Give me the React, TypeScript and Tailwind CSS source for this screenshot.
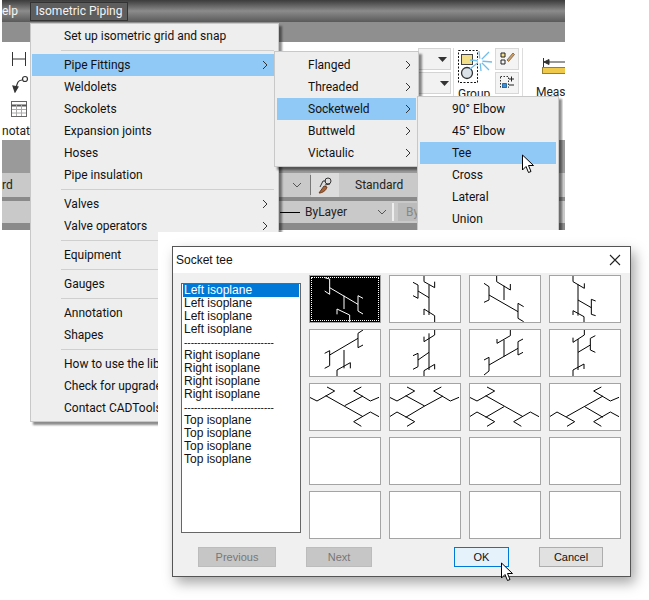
import type { ReactNode } from "react";

const uiFont = "font-['Roboto',sans-serif]";
const dlgFont = "font-['Liberation_Sans',sans-serif]";

type Row = { label?: string; arrow?: boolean; active?: boolean; sep?: boolean };

const mainMenu: Row[] = [
  { label: "Set up isometric grid and snap" },
  { sep: true },
  { label: "Pipe Fittings", arrow: true, active: true },
  { label: "Weldolets" },
  { label: "Sockolets" },
  { label: "Expansion joints" },
  { label: "Hoses" },
  { label: "Pipe insulation" },
  { sep: true },
  { label: "Valves", arrow: true },
  { label: "Valve operators", arrow: true },
  { sep: true },
  { label: "Equipment" },
  { sep: true },
  { label: "Gauges" },
  { sep: true },
  { label: "Annotation" },
  { label: "Shapes" },
  { sep: true },
  { label: "How to use the library" },
  { label: "Check for upgrades" },
  { label: "Contact CADTools" },
];

const fittingsMenu: Row[] = [
  { label: "Flanged", arrow: true },
  { label: "Threaded", arrow: true },
  { label: "Socketweld", arrow: true, active: true },
  { label: "Buttweld", arrow: true },
  { label: "Victaulic", arrow: true },
];

const socketMenu: Row[] = [
  { label: "90° Elbow" },
  { label: "45° Elbow" },
  { label: "Tee", active: true },
  { label: "Cross" },
  { label: "Lateral" },
  { label: "Union" },
];

const isoRows = [
  ["Left isoplane", "Left isoplane", "Left isoplane", "Left isoplane"],
  ["Right isoplane", "Right isoplane", "Right isoplane", "Right isoplane"],
  ["Top isoplane", "Top isoplane", "Top isoplane", "Top isoplane"],
];

// polylines are in the same units for every cell: 3 units = 1px, origin at the sheet's corner
const fittings: { x: number; y: number; d: string }[] = [
  { x: 28, y: 30, d: "M75 38L90 42V88L75 78M90 68L175 118M175 138V92L190 100M175 138L190 147M133 92V132M112 148V132L150 150V172" },
  { x: 268, y: 30, d: "M373 32V50L405 68V50M388 60V150M388 98L355 78M340 52L355 60V100L340 92M373 150V132L405 152V172" },
  { x: 508, y: 30, d: "M591 32V50L632 75V57M613 62V105M568 90L655 140M553 55L568 65V105L553 112M672 125L655 115V160L672 170" },
  { x: 748, y: 30, d: "M820 32V50L854 70V55M835 58V152M835 105L875 128M888 108L875 103V148L888 152M820 150V137L853 155V172" },
  { x: 28, y: 192, d: "M90 270L175 220M190 195L175 205V248L190 240M75 265L90 257V302L75 310M133 255V310M112 333V315L152 293V310" },
  { x: 268, y: 192, d: "M388 205V315M405 195V210L373 230V215M388 262L355 285M340 272L355 265V305L340 313M373 333V317L405 298V313" },
  { x: 508, y: 192, d: "M632 195V212L592 235V222M613 225V275M568 300L655 250M670 222L655 230V270L670 262M553 285L568 277V318L553 330" },
  { x: 748, y: 192, d: "M854 195V210L820 232V218M835 222V315M835 262L872 240M887 212L872 220V255L887 262M820 333V315L853 297V312" },
  { x: 28, y: 354, d: "M30 397L52 408L105 378L82 366M78 392L190 455M185 366L162 378L212 408L238 397M135 422L190 393M238 455L212 441L162 470L185 484" },
  { x: 268, y: 354, d: "M270 397L292 408L345 378L322 366M318 392L375 423L430 393M425 366L402 378L452 408L478 397M270 455L292 441L345 470L322 484M318 457L375 423" },
  { x: 508, y: 354, d: "M510 397L532 408L585 378L562 366M558 392L670 455M510 455L532 441L585 470L562 484M558 457L613 425M718 455L692 441L642 470L665 484" },
  { x: 748, y: 354, d: "M905 366L882 378L932 408L958 397M910 393L800 455M855 425L910 457M958 455L932 441L882 470L905 484M750 455L772 441L825 470L802 484" },
];

function Chevron() {
  return (
    <svg width="6" height="10" viewBox="0 0 6 10" fill="none" stroke="#333" strokeWidth="1">
      <path d="M1 1l4 4-4 4" />
    </svg>
  );
}

function DropChevron() {
  return (
    <svg width="10" height="6" viewBox="0 0 10 6" fill="none" stroke="#555">
      <path d="M1 1l4 4 4-4" />
    </svg>
  );
}

function ArrowCursor({ className }: { className: string }) {
  return (
    <svg className={className} width="14" height="20" viewBox="0 0 13 20" stroke="#000" fill="#fff" strokeWidth="1">
      <path d="M1 1v15l3.500-3.500 2.500 6 2.500-1-2.500-6H12z" />
    </svg>
  );
}

function MenuRows({ rows, inset, trail }: { rows: Row[]; inset: string; trail: string }) {
  return (
    <>
      {rows.map((row, i) =>
        row.sep ? (
          <div key={i} className="my-[3px] ml-[29px] mr-[3px] h-px bg-[#cfcfcf]" />
        ) : (
          <div
            key={i}
            className={`flex h-[22px] items-center justify-between ${inset} ${trail} ${row.active ? "bg-[#90c8f6]" : ""}`}
          >
            <span className="whitespace-nowrap">{row.label}</span>
            {row.arrow && <Chevron />}
          </div>
        ),
      )}
    </>
  );
}

function Menu({ className, children }: { className: string; children: ReactNode }) {
  return (
    <div
      className={`absolute ${uiFont} text-[12px] text-[#111] bg-[#eeeeee] border border-[#c8c8c8] shadow-[3px_3px_2px_rgba(0,0,0,0.45)] ${className}`}
    >
      {children}
    </div>
  );
}

function DimIcon() {
  return (
    <svg width="16" height="16" viewBox="0 0 16 16" fill="none" stroke="#333">
      <path d="M1.500 1v14M14.500 1v14M2 8h12" />
    </svg>
  );
}

function LeaderIcon() {
  return (
    <svg width="18" height="18" viewBox="0 0 18 18" fill="none" stroke="#333" strokeWidth="1.2">
      <circle cx="14" cy="4" r="2.500" />
      <path d="M11 5C7 5 6 8 5 14" />
      <path d="M2 11l2 6 3-5z" fill="#333" />
    </svg>
  );
}

function TableIcon() {
  return (
    <svg width="16" height="16" viewBox="0 0 16 16" fill="#fff" stroke="#666">
      <rect x="0.500" y="0.500" width="15" height="15" />
      <path d="M0.500 4.500h15" stroke="#555" strokeWidth="2" />
      <path d="M5.500 4v11M10.500 4v11M1 8.500h14M1 12h14" stroke="#aaa" />
    </svg>
  );
}

function GroupIcon() {
  return (
    <svg width="36" height="34" viewBox="0 0 36 34" fill="none">
      <rect x="0.500" y="0.500" width="19" height="32" stroke="#111" strokeDasharray="2 1.500" />
      <rect x="3.500" y="4.500" width="11" height="10" fill="#f3de8a" stroke="#444" />
      <circle cx="9" cy="23" r="5.500" fill="#dbe3e8" stroke="#333" strokeWidth="1.300" />
      <path d="M22 11l9-9M22 11l12 1M22 11l9 9M22 11l-10-1M22 11L12 19M22 11l-1-10M22 11l1 10" stroke="#6fbdea" strokeWidth="1.300" />
      <circle cx="22" cy="11" r="2.500" fill="#fff" />
    </svg>
  );
}

function ComboBox({ tip }: { tip: string }) {
  return (
    <div className={`flex h-[22px] w-[33px] items-center border border-[#d4d4d4] bg-[#f2f2f2] ${tip}`}>
      <svg width="9" height="5" viewBox="0 0 9 5" fill="#333">
        <path d="M0 0h9L4.500 5z" />
      </svg>
    </div>
  );
}

function RibbonTool({ children }: { children: ReactNode }) {
  return (
    <div className="flex h-[22px] w-[24px] items-center justify-center border border-[#d8d8d8] bg-[#f4f4f4]">
      <svg width="18" height="18" viewBox="0 0 18 18" fill="none">
        {children}
      </svg>
    </div>
  );
}

function Fitting({ x, y, d, selected }: { x: number; y: number; d: string; selected: boolean }) {
  return (
    <div className={`relative box-border h-[48px] w-[72px] border border-[#a4a4a4] ${selected ? "bg-black" : "bg-white"}`}>
      {selected && <div className="absolute inset-px border border-dotted border-white" />}
      <svg
        className="h-full w-full"
        viewBox={`${x + 3} ${y + 3} 210 138`}
        fill="none"
        stroke={selected ? "#fff" : "#000"}
        strokeWidth="3"
      >
        <path d={d} />
      </svg>
    </div>
  );
}

function DialogButton({ label, className }: { label: string; className: string }) {
  return (
    <button type="button" className={`box-border h-[20px] border text-[11px] ${className}`}>
      {label}
    </button>
  );
}

function SocketTeeDialog() {
  return (
    <div className={`absolute left-[158px] top-[232px] h-[368px] w-[491px] bg-white ${dlgFont}`}>
      <div className="absolute left-[14px] top-[14px] flex h-[331px] w-[459px] flex-col border border-[#555] bg-[#f0f0f0] shadow-[4px_6px_12px_rgba(0,0,0,0.35)]">
        <div className="flex h-[26px] items-center justify-between bg-white pl-[3px] pr-[9px] text-[12px] text-[#111]">
          <span>Socket tee</span>
          <svg width="12" height="12" viewBox="0 0 12 12" stroke="#222" strokeWidth="1.100">
            <path d="M1 1l10 10M11 1L1 11" />
          </svg>
        </div>
        <div className="flex pl-[8px] pr-[8px] pt-[2px]">
          <div className="mt-[8px] box-border h-[250px] w-[120px] border border-[#666] bg-white px-px text-[12px] leading-[13px] text-[#111]">
            {isoRows.map((group, g) => (
              <div key={g}>
                {group.map((label, i) => (
                  <div key={i} className={`pl-[1px] ${g === 0 && i === 0 ? "bg-[#0078d7] text-white" : ""}`}>
                    {label}
                  </div>
                ))}
                {g < 2 && <div className="h-[13px] overflow-hidden pl-[1px] text-[10px]">---------------------------</div>}
              </div>
            ))}
          </div>
          <div className="ml-[8px] grid grid-cols-4 gap-x-[8px] gap-y-[6px]">
            {fittings.map((f, i) => (
              <Fitting key={i} x={f.x} y={f.y} d={f.d} selected={i === 0} />
            ))}
            {Array.from({ length: 8 }).map((_, i) => (
              <div key={i} className="box-border h-[48px] w-[72px] border border-[#a4a4a4] bg-white" />
            ))}
          </div>
        </div>
        <div className="flex pl-[25px] pt-[8px]">
          <DialogButton label="Previous" className="w-[78px] border-[#bcbcbc] bg-[#c6c6c6] text-[#777]" />
          <DialogButton label="Next" className="ml-[30px] w-[66px] border-[#bcbcbc] bg-[#c6c6c6] text-[#777]" />
          <DialogButton label="OK" className="ml-[82px] w-[55px] border-[#0078d7] bg-[#e5f1fb] text-[#111]" />
          <DialogButton label="Cancel" className="ml-[30px] w-[64px] border-[#adadad] bg-[#e1e1e1] text-[#111]" />
        </div>
      </div>
      <ArrowCursor className="absolute left-[342px] top-[330px]" />
    </div>
  );
}

export default function App() {
  return (
    <div className="relative h-[600px] w-[649px] overflow-hidden bg-white">
      <div className={`ml-[2px] flex h-[230px] w-[563px] flex-col ${uiFont} text-[12px] text-[#222]`}>
        {/* menu bar */}
        <div className="flex h-[22px] items-center bg-gradient-to-b from-[#3c3c3c] via-[#8c8c8c] to-[#5a5a5a] text-[#f4f4f4]">
          <span className="w-[28px]">elp</span>
          <span className="flex h-[19px] w-[98px] items-center justify-center border border-[#333] bg-[#5e5e5e]">
            Isometric Piping
          </span>
        </div>
        <div className="h-[20px] bg-[#8f8f8f]" />
        {/* ribbon */}
        <div className="flex h-[98px] justify-between bg-white">
          <div className="flex flex-col justify-between pb-[1px] pt-[9px]">
            <div className="flex flex-col gap-[8px] pl-[9px]">
              <DimIcon />
              <LeaderIcon />
              <TableIcon />
            </div>
            <span className="whitespace-nowrap leading-[15px]">notat</span>
          </div>
          <div className="flex items-start pt-[6px]">
            <div className="flex flex-col gap-[2px]">
              <ComboBox tip="justify-end pr-[3px]" />
              <ComboBox tip="justify-end pr-[1px]" />
            </div>
            <div className="ml-[2px] h-[60px] w-px bg-[#ddd]" />
            <div className="ml-[4px] w-[37px] pt-[2px]">
              <GroupIcon />
              <div className="pt-[3px] leading-[14px]">Group</div>
            </div>
            <div className="flex flex-col gap-[2px]">
              <RibbonTool>
                <path d="M3 3h4v4H3z" fill="#f3de8a" stroke="#222" />
                <path d="M3 10h4v4H3z" stroke="#222" />
                <path d="M9 10l6-7 1.500 1.500-6 7z" fill="#e59a3c" stroke="#777" />
              </RibbonTool>
              <RibbonTool>
                <path d="M2.500 2.500h8v11h-8z" stroke="#333" strokeDasharray="1.500 1.500" />
                <path d="M4.500 9.500h4v4h-4z" fill="#3b8fd6" stroke="#2a6aa6" />
                <path d="M11 5h5M13.500 2.500v5M11 11h5" stroke="#222" />
              </RibbonTool>
            </div>
            <div className="ml-[3px] h-[60px] w-px bg-[#ddd]" />
            <div className="ml-[13px] w-[29px] overflow-hidden">
              <div className="ml-[6px] pt-[9px]">
                <svg width="30" height="18" viewBox="0 0 30 18" fill="none" stroke="#333">
                  <path d="M1.500 1v9M2 5h28" />
                  <path d="M2 5l5-2.500v5z" fill="#333" />
                  <rect x="0.500" y="10.500" width="30" height="6" fill="#eec94c" stroke="#9a8028" />
                </svg>
              </div>
              <div className="mt-[8px] whitespace-nowrap">Measu</div>
            </div>
          </div>
        </div>
        <div className="h-[33px] bg-[#9a9a9a]" />
        {/* property toolbars */}
        <div className="flex h-[24px] items-center bg-[#c9c9c9]">
          <span className="w-[278px]">rd</span>
          <div className="ml-[12px]">
            <DropChevron />
          </div>
          <div className="ml-[8px] h-[20px] w-px bg-[#777]" />
          <div className="flex h-[24px] w-[28px] items-center justify-center bg-[#dcdcdc]">
            <svg width="18" height="18" viewBox="0 0 18 18" fill="none" stroke="#333">
              <circle cx="12" cy="5" r="3" />
              <path d="M4 11L7 5M7 5h3M9 9l5-1" />
              <path d="M3 17c3 0 7-2 8-6l-3-1z" fill="#a8653a" stroke="#6b3d20" />
            </svg>
          </div>
          <span className="ml-[16px] whitespace-nowrap">Standard</span>
        </div>
        <div className="h-[4px] bg-[#8a8a8a]" />
        <div className="flex h-[22px] items-center bg-[#c9c9c9] pl-[278px]">
          <div className="h-px w-[20px] bg-black" />
          <span className="ml-[5px] w-[72px]">ByLayer</span>
          <DropChevron />
          <div className="ml-[5px] h-[18px] w-[2px] bg-[#eee]" />
          <span className="ml-[4px] bg-[#bbb] px-[8px] text-[#888]">By</span>
        </div>
        <div className="flex-1 bg-[#8a8a8a]" />
      </div>

      <Menu className="left-[30px] top-[23px] w-[249px] px-px pb-[2px] pt-px">
        <MenuRows rows={mainMenu} inset="pl-[32px]" trail="pr-[9px]" />
      </Menu>
      <Menu className="left-[274px] top-[51px] w-[145px] p-[2px]">
        <MenuRows rows={fittingsMenu} inset="pl-[31px]" trail="pr-[5px]" />
      </Menu>
      {/* third level runs past the app crop, so its bottom edge is cut by the white page */}
      <div className="absolute left-[417px] top-[96px] h-[134px] w-[146px] overflow-hidden">
        <Menu className="left-0 top-0 w-[142px] px-[2px] pb-[20px] pt-px">
          <MenuRows rows={socketMenu} inset="pl-[32px]" trail="pr-[6px]" />
        </Menu>
      </div>
      <ArrowCursor className="absolute left-[521px] top-[154px]" />

      <SocketTeeDialog />
    </div>
  );
}
